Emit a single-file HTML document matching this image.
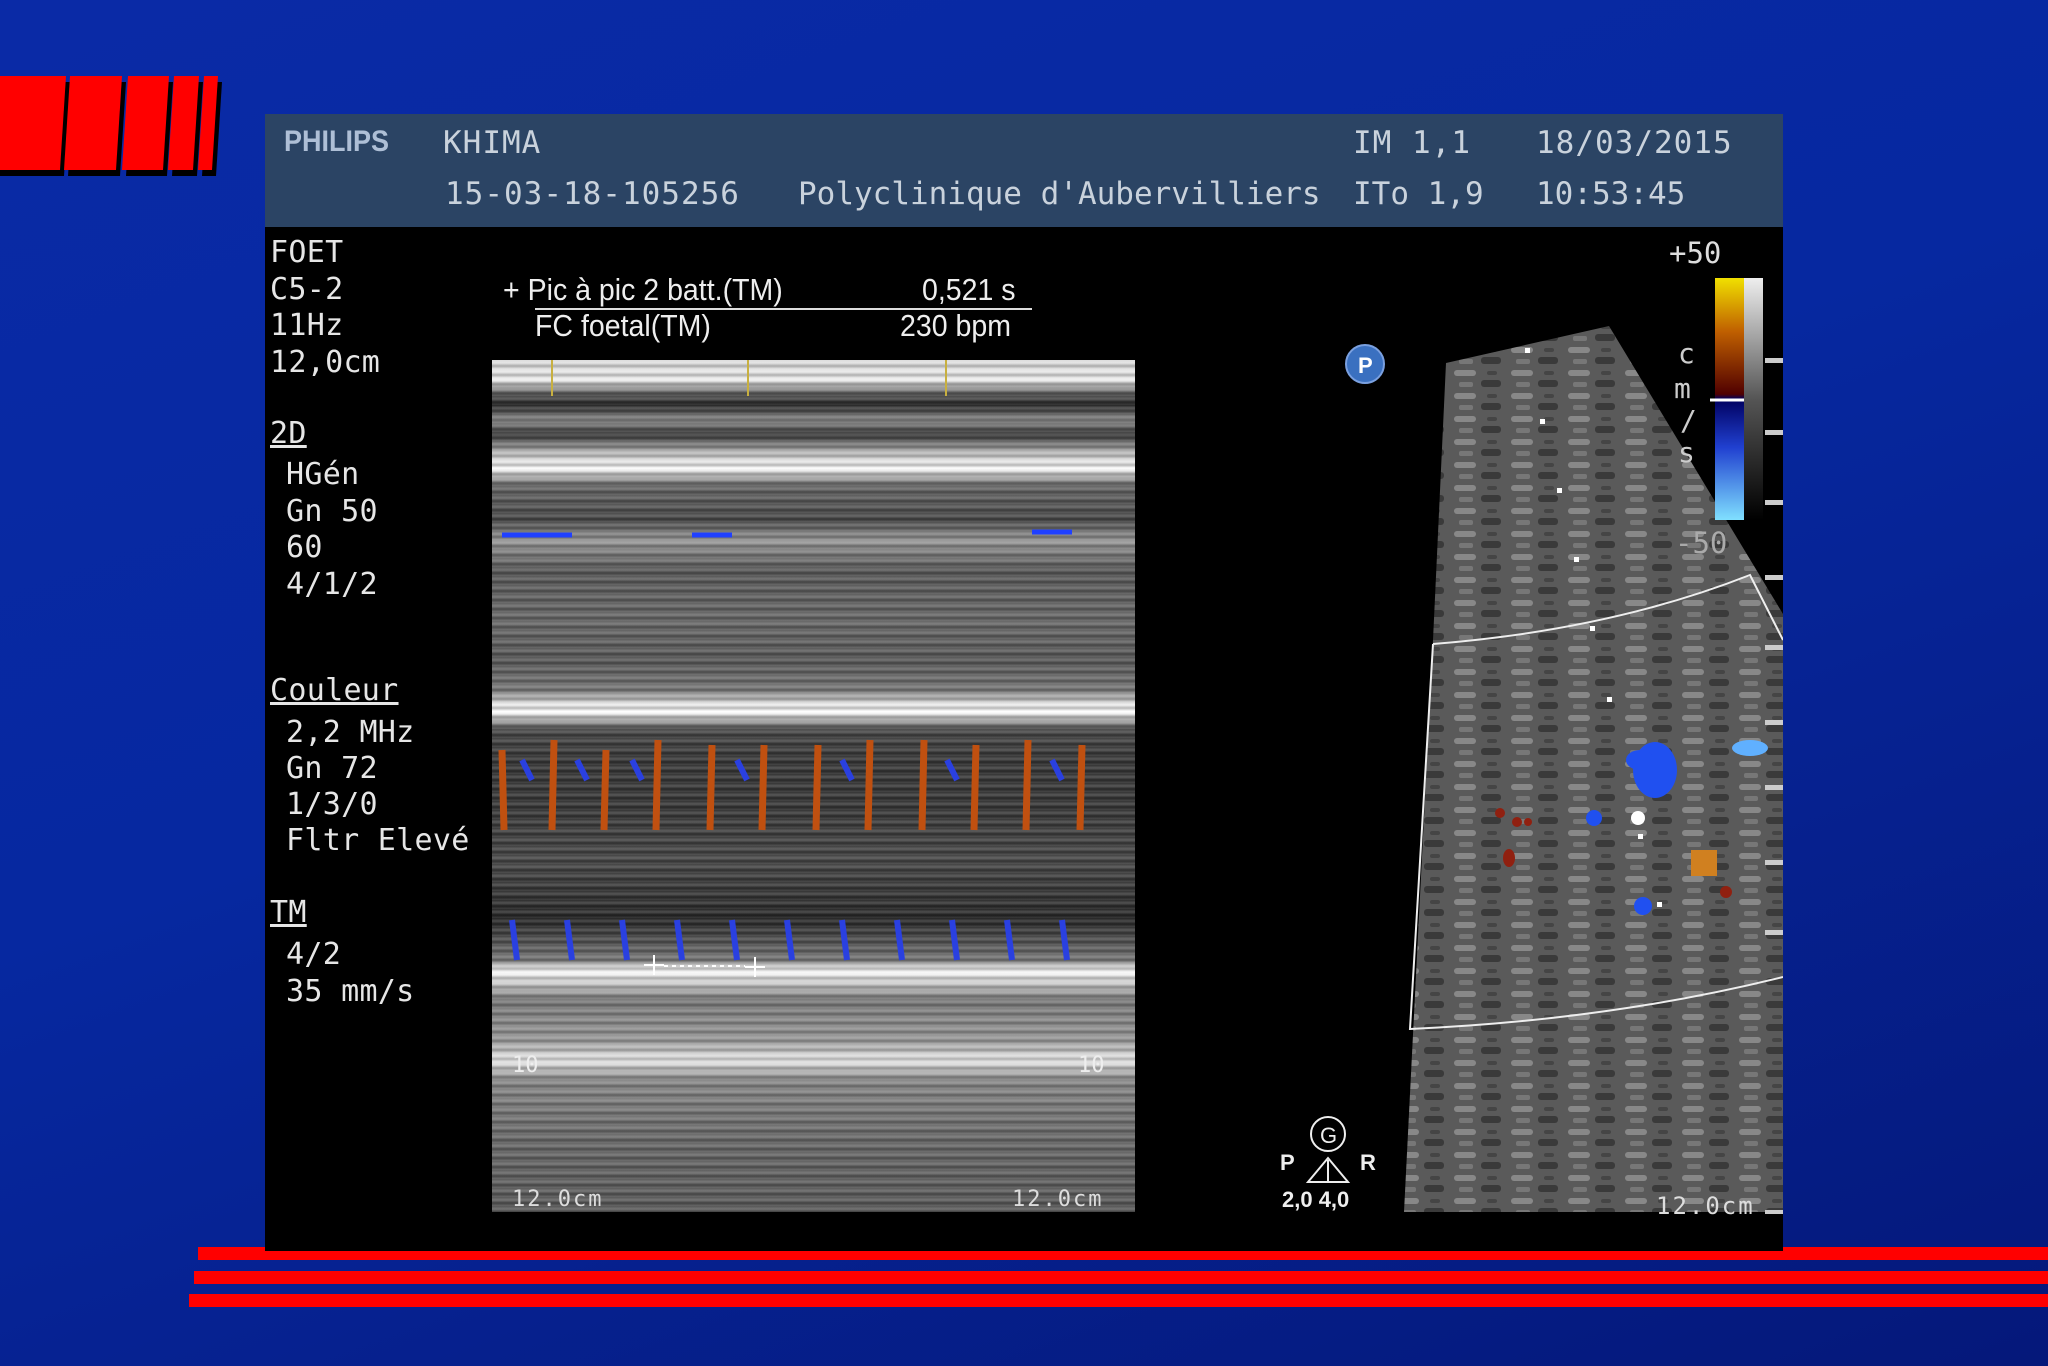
<!DOCTYPE html>
<html><head><meta charset="utf-8"><style>
body{margin:0;width:2048px;height:1366px;overflow:hidden;background:linear-gradient(160deg,#0a2aa6 0%,#0628a0 45%,#05187a 100%);font-family:"DejaVu Sans Mono","Liberation Mono",monospace;position:relative}
.a{position:absolute;white-space:nowrap}
#panel{position:absolute;left:265px;top:114px;width:1518px;height:1137px;background:#000}
#hdr{position:absolute;left:265px;top:114px;width:1518px;height:113px;background:#2b4464}
.h{color:#c9d2dc;font-size:31px;letter-spacing:1px}
.l{color:#e6e6e6;font-size:30px;letter-spacing:0.3px}
.m{font-family:"Liberation Sans",sans-serif;color:#eee;font-size:31px;transform:scaleX(0.92);transform-origin:left}
#mm{position:absolute;left:492px;top:360px;width:643px;height:852px;
background:
repeating-linear-gradient(180deg,rgba(255,255,255,.0) 0px,rgba(255,255,255,.18) 3px,rgba(0,0,0,.25) 6px,rgba(255,255,255,.1) 9px),
linear-gradient(180deg,#ddd 0px,#eee 20px,#555 34px,#222 45px,#888 60px,#333 75px,#ccc 95px,#fff 108px,#666 125px,#444 160px,#999 180px,#555 210px,#666 260px,#555 300px,#777 330px,#eee 345px,#fff 352px,#444 370px,#333 400px,#333 450px,#444 500px,#222 560px,#777 600px,#fff 610px,#ddd 620px,#777 640px,#999 680px,#eee 700px,#888 720px,#666 780px,#555 852px)}
</style></head><body>
<svg class="a" style="left:0;top:76px" width="225" height="100"><g fill="#000"><polygon points="0,6 70,6 64,100 0,100"/><polygon points="74,6 126,6 120,100 68,100"/><polygon points="132,6 173,6 167,100 126,100"/><polygon points="178,6 203,6 197,100 172,100"/><polygon points="208,6 222,6 216,100 202,100"/></g><g fill="#ff0000"><polygon points="0,0 66,0 60,94 0,94"/><polygon points="70,0 122,0 116,94 64,94"/><polygon points="128,0 169,0 163,94 122,94"/><polygon points="174,0 199,0 193,94 168,94"/><polygon points="204,0 218,0 212,94 198,94"/></g></svg>
<div class="a" style="left:198px;top:1247px;width:1850px;height:13px;background:#f00"></div>
<div class="a" style="left:194px;top:1271px;width:1854px;height:13px;background:#f00"></div>
<div class="a" style="left:189px;top:1294px;width:1859px;height:13px;background:#f00"></div>
<div id="panel"></div>
<div id="hdr"></div>
<div class="a" style="left:284px;top:125px;font-family:'Liberation Sans',sans-serif;font-weight:bold;font-size:30px;color:#aebfd6;letter-spacing:0px;transform:scaleX(0.9);transform-origin:left">PHILIPS</div>
<div class="a h" style="left:443px;top:125px">KHIMA</div>
<div class="a h" style="left:1353px;top:125px">IM 1,1</div>
<div class="a h" style="left:1536px;top:125px">18/03/2015</div>
<div class="a h" style="left:445px;top:176px">15-03-18-105256</div>
<div class="a h" style="left:798px;top:176px;letter-spacing:0">Polyclinique d'Aubervilliers</div>
<div class="a h" style="left:1353px;top:176px;letter-spacing:0">ITo 1,9</div>
<div class="a h" style="left:1536px;top:176px;letter-spacing:0">10:53:45</div>
<div class="a l" style="left:270px;top:235px;line-height:36.5px">FOET<br>C5-2<br>11Hz<br>12,0cm</div>
<div class="a l" style="left:270px;top:416px;text-decoration:underline">2D</div>
<div class="a l" style="left:286px;top:457px;line-height:36.5px">HGén<br>Gn 50<br>60<br>4/1/2</div>
<div class="a l" style="left:270px;top:673px;text-decoration:underline">Couleur</div>
<div class="a l" style="left:286px;top:715px;line-height:36px">2,2 MHz<br>Gn 72<br>1/3/0<br>Fltr Elevé</div>
<div class="a l" style="left:270px;top:895px;text-decoration:underline">TM</div>
<div class="a l" style="left:286px;top:937px;line-height:36.5px">4/2<br>35 mm/s</div>
<div class="a m" style="left:503px;top:272px">+ Pic à pic 2 batt.(TM)</div>
<div class="a m" style="left:922px;top:272px">0,521 s</div>
<div class="a" style="left:535px;top:308px;width:497px;height:2px;background:#ddd"></div>
<div class="a m" style="left:535px;top:308px">FC foetal(TM)</div>
<div class="a m" style="left:900px;top:308px">230 bpm</div>
<div id="mm"></div>
<svg class="a" style="left:492px;top:360px" width="643" height="852">
<g stroke="#c8b040" stroke-width="2"><line x1="60" y1="0" x2="60" y2="36"/><line x1="256" y1="0" x2="256" y2="36"/><line x1="454" y1="0" x2="454" y2="36"/></g>
<g stroke="#2040ff" stroke-width="5"><line x1="10" y1="175" x2="80" y2="175"/><line x1="200" y1="175" x2="240" y2="175"/><line x1="540" y1="172" x2="580" y2="172"/></g>
<g stroke="#c05010" stroke-width="7">
<line x1="10" y1="390" x2="12" y2="470"/><line x1="62" y1="380" x2="60" y2="470"/><line x1="114" y1="390" x2="112" y2="470"/><line x1="166" y1="380" x2="164" y2="470"/><line x1="220" y1="385" x2="218" y2="470"/><line x1="272" y1="385" x2="270" y2="470"/><line x1="326" y1="385" x2="324" y2="470"/><line x1="378" y1="380" x2="376" y2="470"/><line x1="432" y1="380" x2="430" y2="470"/><line x1="484" y1="385" x2="482" y2="470"/><line x1="536" y1="380" x2="534" y2="470"/><line x1="590" y1="385" x2="588" y2="470"/></g>
<g stroke="#2a40e0" stroke-width="6">
<line x1="30" y1="400" x2="40" y2="420"/><line x1="85" y1="400" x2="95" y2="420"/><line x1="140" y1="400" x2="150" y2="420"/><line x1="245" y1="400" x2="255" y2="420"/><line x1="350" y1="400" x2="360" y2="420"/><line x1="455" y1="400" x2="465" y2="420"/><line x1="560" y1="400" x2="570" y2="420"/>
<line x1="20" y1="560" x2="25" y2="600"/><line x1="75" y1="560" x2="80" y2="600"/><line x1="130" y1="560" x2="135" y2="600"/><line x1="185" y1="560" x2="190" y2="600"/><line x1="240" y1="560" x2="245" y2="600"/><line x1="295" y1="560" x2="300" y2="600"/><line x1="350" y1="560" x2="355" y2="600"/><line x1="405" y1="560" x2="410" y2="600"/><line x1="460" y1="560" x2="465" y2="600"/><line x1="515" y1="560" x2="520" y2="600"/><line x1="570" y1="560" x2="575" y2="600"/></g>
<g stroke="#fff" stroke-width="2"><line x1="152" y1="605" x2="172" y2="605"/><line x1="162" y1="595" x2="162" y2="615"/><line x1="253" y1="607" x2="273" y2="607"/><line x1="263" y1="597" x2="263" y2="617"/><line x1="172" y1="606" x2="253" y2="606" stroke-dasharray="4 4"/></g>
<text x="20" y="712" fill="#eee" font-size="22" font-family="DejaVu Sans Mono">10</text><text x="586" y="712" fill="#eee" font-size="22" font-family="DejaVu Sans Mono">10</text>
<text x="20" y="846" fill="#ddd" font-size="22" font-family="DejaVu Sans Mono" letter-spacing="2">12.0cm</text><text x="520" y="846" fill="#ddd" font-size="22" font-family="DejaVu Sans Mono" letter-spacing="2">12.0cm</text>
</svg>
<svg class="a" style="left:1280px;top:230px" width="503" height="1000">
<defs><linearGradient id="cb" x1="0" y1="0" x2="0" y2="1"><stop offset="0" stop-color="#f0e000"/><stop offset=".22" stop-color="#c06000"/><stop offset=".48" stop-color="#500000"/><stop offset=".5" stop-color="#000060"/><stop offset=".7" stop-color="#2040d0"/><stop offset="1" stop-color="#80e0ff"/></linearGradient>
<linearGradient id="gb" x1="0" y1="0" x2="0" y2="1"><stop offset="0" stop-color="#eee"/><stop offset=".5" stop-color="#555"/><stop offset="1" stop-color="#000"/></linearGradient>
<pattern id="sp" width="57" height="23" patternUnits="userSpaceOnUse"><rect width="57" height="23" fill="#5a5a5a"/><rect x="3" y="2" width="22" height="6" rx="3" fill="#888"/><rect x="30" y="12" width="20" height="7" rx="3" fill="#3a3a3a"/><rect x="8" y="14" width="14" height="5" rx="2" fill="#777"/><rect x="36" y="3" width="10" height="4" rx="2" fill="#454545"/></pattern></defs>
<polygon points="166,133 329,96 503,384 503,982 124,982 153,410" fill="url(#sp)"/>
<path d="M153,414 Q330,400 470,345 L503,410 M153,414 L130,799 Q330,790 503,747" stroke="#eee" stroke-width="2" fill="none"/>
<g fill="#2050f0"><ellipse cx="375" cy="540" rx="22" ry="28"/><ellipse cx="360" cy="530" rx="14" ry="10"/><circle cx="314" cy="588" r="8"/><circle cx="363" cy="676" r="9"/></g>
<ellipse cx="470" cy="518" rx="18" ry="8" fill="#60b0ff"/>
<rect x="411" y="620" width="26" height="26" fill="#d08020"/>
<g fill="#902010"><circle cx="220" cy="583" r="5"/><circle cx="237" cy="592" r="5"/><circle cx="248" cy="592" r="4"/><ellipse cx="229" cy="628" rx="6" ry="9"/><circle cx="446" cy="662" r="6"/></g>
<circle cx="358" cy="588" r="7" fill="#fff"/>
<g fill="#fff"><rect x="245" y="118" width="5" height="5"/><rect x="260" y="189" width="5" height="5"/><rect x="277" y="258" width="5" height="5"/><rect x="294" y="327" width="5" height="5"/><rect x="310" y="396" width="5" height="5"/><rect x="327" y="467" width="5" height="5"/><rect x="358" y="604" width="5" height="5"/><rect x="377" y="672" width="5" height="5"/></g>
<rect x="435" y="48" width="29" height="242" fill="url(#cb)"/>
<rect x="464" y="48" width="19" height="242" fill="url(#gb)"/>
<line x1="430" y1="170" x2="464" y2="170" stroke="#fff" stroke-width="3"/>
<g fill="#ccc"><rect x="485" y="128" width="18" height="5"/><rect x="485" y="200" width="18" height="5"/><rect x="485" y="270" width="18" height="5"/><rect x="485" y="345" width="18" height="5"/><rect x="485" y="415" width="18" height="5"/><rect x="485" y="490" width="18" height="5"/><rect x="485" y="555" width="18" height="5"/><rect x="485" y="630" width="18" height="5"/><rect x="485" y="700" width="18" height="5"/><rect x="485" y="980" width="18" height="4"/></g>
<text x="389" y="33" fill="#ddd" font-size="29" font-family="DejaVu Sans Mono">+50</text>
<text x="395" y="323" fill="#aaa" font-size="29" font-family="DejaVu Sans Mono">-50</text>
<text x="398" y="133" fill="#ccc" font-size="28" font-family="DejaVu Sans Mono">c</text><text x="394" y="168" fill="#ccc" font-size="28" font-family="DejaVu Sans Mono">m</text><text x="400" y="200" fill="#ccc" font-size="28" font-family="DejaVu Sans Mono">/</text><text x="398" y="232" fill="#ccc" font-size="28" font-family="DejaVu Sans Mono">s</text>
<text x="376" y="984" fill="#ddd" font-size="24" font-family="DejaVu Sans Mono" letter-spacing="2">12.0cm</text>
<circle cx="85" cy="134" r="19" fill="#3a70c0" stroke="#7aa0e0" stroke-width="2"/><text x="78" y="143" fill="#fff" font-size="22" font-weight="bold" font-family="Liberation Sans">P</text>
<circle cx="48" cy="904" r="17" fill="none" stroke="#eee" stroke-width="2"/><text x="40" y="913" fill="#eee" font-size="22" font-family="Liberation Sans">G</text>
<path d="M28,952 L48,928 L68,952 Z M48,930 L48,952" stroke="#eee" stroke-width="2" fill="none"/>
<text x="0" y="940" fill="#eee" font-size="22" font-family="Liberation Sans" font-weight="bold">P</text><text x="80" y="940" fill="#eee" font-size="22" font-family="Liberation Sans" font-weight="bold">R</text>
<text x="2" y="977" fill="#eee" font-size="22" font-family="Liberation Sans" font-weight="bold">2,0 4,0</text>
</svg>
</body></html>
